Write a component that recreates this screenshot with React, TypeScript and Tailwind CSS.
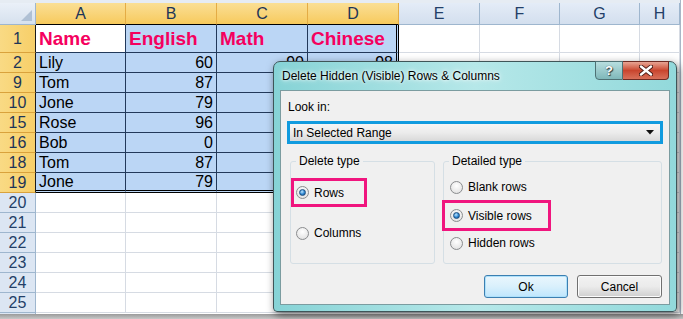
import * as React from 'react';

function cx(...a: (string | false | null | undefined)[]) {
  return a.filter(Boolean).join(' ');
}

/* ========================= sheet data ========================= */
const COLS = ['A', 'B', 'C', 'D', 'E', 'F', 'G', 'H'];
const WIDTHS = ['w-[90px]', 'w-[91px]', 'w-[91px]', 'w-[91px]', 'w-[81px]', 'w-[80px]', 'w-[80px]', 'flex-1'];

type Row = { n: string; v?: string[]; sel?: boolean };

// C/D values sit under the dialog; only row 2's tops peek out
const ROWS: Row[] = [
  { n: '2', v: ['Lily', '60', '90', '98'], sel: true },
  { n: '9', v: ['Tom', '87'], sel: true },
  { n: '10', v: ['Jone', '79'], sel: true },
  { n: '15', v: ['Rose', '96'], sel: true },
  { n: '16', v: ['Bob', '0'], sel: true },
  { n: '18', v: ['Tom', '87'], sel: true },
  { n: '19', v: ['Jone', '79'], sel: true },
  { n: '20' },
  { n: '21' },
  { n: '22' },
  { n: '23' },
  { n: '24' },
  { n: '25' },
];

function RowHead({ n, sel, h }: { n: string; sel?: boolean; h: string }) {
  return (
    <div
      className={cx(
        'w-[36px] shrink-0 flex items-center justify-center border-r border-b text-[16px]',
        h,
        sel
          ? 'bg-gradient-to-r from-[#F9DA84] to-[#F7CF68] border-b-[#D9A23C] border-r-[#1b1b1b] text-[#1D3557]'
          : 'bg-[#DCE6F3] border-b-[#9EB6CE] border-r-[#9EB6CE] text-[#233F68]'
      )}
    >
      {n}
    </div>
  );
}

function SheetRow({ row, last }: { row: Row; last?: boolean }) {
  return (
    <div className="flex h-[20px]">
      <RowHead n={row.n} sel={row.sel} h="h-[20px]" />
      {COLS.map((c, i) => {
        const sel = row.sel && i < 4;
        const val = row.v ? row.v[i] : undefined;
        return (
          <div
            key={c}
            className={cx(
              'shrink-0 flex items-center border-r border-b text-[16px] text-black overflow-hidden whitespace-nowrap',
              WIDTHS[i],
              i === 0 ? 'pl-[3px]' : 'justify-end pr-[3px]',
              sel ? 'bg-[#BBD6F5] border-[#22395A]' : 'bg-white border-[#D6DBE3]',
              sel && i === 3 && 'border-r-[3px] border-r-black border-double',
              sel && last && 'border-b-[3px] border-b-black border-double'
            )}
          >
            {val}
          </div>
        );
      })}
    </div>
  );
}

/* ========================= dialog bits ========================= */
function Radio({ checked }: { checked?: boolean }) {
  return (
    <span className="w-[13px] h-[13px] shrink-0 rounded-full border border-[#8A8C8E] bg-[radial-gradient(circle_at_50%_35%,#ffffff,#dcdcdc)] flex items-center justify-center">
      {checked && (
        <span className="w-[7px] h-[7px] rounded-full border border-[#1E4E7E] bg-[radial-gradient(circle_at_40%_35%,#bfe6ff,#2c86d1_55%,#0f4a86)]" />
      )}
    </span>
  );
}

function Option({ label, checked }: { label: string; checked?: boolean }) {
  return (
    <div className="flex items-center gap-[5px] h-[16px]">
      <Radio checked={checked} />
      <span>{label}</span>
    </div>
  );
}

function Button({ label, focus, className = '' }: { label: string; focus?: boolean; className?: string }) {
  return (
    <button
      className={cx(
        'h-[23px] rounded-[3px] border text-[12px] text-black',
        focus
          ? 'border-[#3C7FB1] bg-gradient-to-b from-[#EAF6FD] via-[#D9F0FC] to-[#BEE6FD] shadow-[inset_0_0_0_1px_#aee1fb]'
          : 'border-[#707070] bg-gradient-to-b from-[#F2F2F2] via-[#EBEBEB] to-[#CFCFCF] shadow-[inset_0_0_0_1px_#fcfcfc]',
        className
      )}
    >
      {label}
    </button>
  );
}

function Dialog() {
  return (
    <div className="absolute left-[273px] top-[61px] w-[404px] h-[251px] rounded-t-[7px] rounded-b-[4px] border border-[#3F5558] bg-gradient-to-r from-[#86D3D6] via-[#B6E8E9] to-[#92D9DB] shadow-[2px_3px_8px_rgba(0,0,0,0.55)] flex flex-col px-[6px] pb-[6px] font-['Liberation_Sans',Arial,sans-serif]">
      {/* title bar */}
      <div className="h-[28px] flex justify-between">
        <div className="self-center pl-[2px] text-[12px] text-black [text-shadow:0_0_6px_#ffffff,0_0_3px_#ffffff]">
          Delete Hidden (Visible) Rows &amp; Columns
        </div>
        <div className="flex self-start -mt-px mr-[1px]">
          <div className="w-[28px] h-[19px] rounded-bl-[4px] border border-[#4E7174] bg-gradient-to-b from-[#B7DEDF] to-[#7FB8BA] flex items-center justify-center text-[13px] font-bold text-white [text-shadow:0_0_1px_#2c3e40,1px_1px_1px_#2c3e40]">
            ?
          </div>
          <div className="w-[46px] h-[19px] rounded-br-[4px] border border-l-0 border-[#6E2A22] bg-gradient-to-b from-[#E7A493] via-[#C9452E] to-[#D8705A] flex items-center justify-center">
            <svg width="14" height="11" viewBox="0 0 14 11">
              <path d="M2 1.5 L12 9.5 M12 1.5 L2 9.5" stroke="#4a1a14" strokeWidth="4.2" strokeLinecap="round" />
              <path d="M2 1.5 L12 9.5 M12 1.5 L2 9.5" stroke="#ffffff" strokeWidth="2.4" strokeLinecap="round" />
            </svg>
          </div>
        </div>
      </div>

      {/* client area */}
      <div className="flex-1 bg-[#F0F0F0] border border-[#7B9CA0] flex flex-col text-[12px] text-black">
        <div className="pl-[7px] pt-[8px] leading-[16px]">Look in:</div>
        <div className="mx-[6px] mt-[6px] h-[23px] border-[3px] border-[#119BDF] bg-gradient-to-b from-[#F5F5F5] via-[#ECECEC] to-[#D9D9D9] flex items-center justify-between pl-[3px] pr-[6px]">
          <span>In Selected Range</span>
          <svg width="8" height="5" viewBox="0 0 8 5">
            <path d="M0 0 H8 L4 4.5 Z" fill="#111" />
          </svg>
        </div>

        <div className="flex gap-[8px] pl-[9px] pr-[7px] mt-[10px]">
          <fieldset className="w-[145px] h-[110px] border border-[#D5DFE5] rounded-[3px]">
            <legend className="ml-[5px] px-[3px] leading-[14px]">Delete type</legend>
            <div className="mt-[10px] w-[76px] h-[29px] border-[3px] border-[#F0157E] flex items-center pl-[2px]">
              <Option label="Rows" checked />
            </div>
            <div className="mt-[18px] pl-[5px]">
              <Option label="Columns" />
            </div>
          </fieldset>
          <fieldset className="flex-1 h-[110px] border border-[#D5DFE5] rounded-[3px]">
            <legend className="ml-[5px] px-[3px] leading-[14px]">Detailed type</legend>
            <div className="mt-[11px] pl-[6px]">
              <Option label="Blank rows" />
            </div>
            <div className="mt-[5px] -ml-[2px] w-[109px] h-[31px] border-[3px] border-[#F0157E] flex items-center pl-[5px]">
              <Option label="Visible rows" checked />
            </div>
            <div className="mt-[4px] pl-[6px]">
              <Option label="Hidden rows" />
            </div>
          </fieldset>
        </div>

        <div className="flex justify-end gap-[9px] pr-[7px] mt-[11px]">
          <Button label="Ok" focus className="w-[84px]" />
          <Button label="Cancel" className="w-[85px]" />
        </div>
      </div>
    </div>
  );
}

/* ========================= app ========================= */
export default function App() {
  return (
    <div className="relative w-[683px] h-[319px] overflow-hidden bg-white font-['Liberation_Sans',Arial,sans-serif]">
      <div className="w-[681px] border-r border-[#A9B6C6]">
        <div className="h-[3px] bg-[#E6ECF3]" />

        {/* column headers */}
        <div className="flex h-[22px]">
          <div className="w-[36px] shrink-0 border-r border-b border-[#9EB6CE] bg-gradient-to-b from-[#EAF0F8] to-[#D6E1EE] relative">
            <svg className="absolute right-[3px] bottom-[3px]" width="11" height="11" viewBox="0 0 11 11">
              <path d="M11 0 V11 H0 Z" fill="#AFC0D4" />
            </svg>
          </div>
          {COLS.map((c, i) => (
            <div
              key={c}
              className={cx(
                'shrink-0 flex items-center justify-center border-r border-b text-[16px]',
                WIDTHS[i],
                i < 4
                  ? 'bg-gradient-to-b from-[#FADF94] to-[#F7CA5C] border-r-[#E4AC45] border-b-black text-[#1D3557]'
                  : 'bg-gradient-to-b from-[#E4ECF7] to-[#D3DFEE] border-[#9EB6CE] text-[#233F68]'
              )}
            >
              {c}
            </div>
          ))}
        </div>

        {/* row 1 */}
        <div className="flex h-[28px]">
          <RowHead n="1" sel h="h-[28px]" />
          {COLS.map((c, i) => (
            <div
              key={c}
              className={cx(
                'shrink-0 flex items-end pb-[1px] pl-[3px] border-r border-b text-[19px] leading-[24px] font-bold text-[#F5005E] whitespace-nowrap overflow-hidden',
                WIDTHS[i],
                i === 0 && 'bg-white border-[#22395A]',
                i > 0 && i < 4 && 'bg-[#BBD6F5] border-[#22395A]',
                i === 3 && 'border-r-[3px] border-r-black border-double',
                i >= 4 && 'bg-white border-[#D6DBE3]'
              )}
            >
              {['Name', 'English', 'Math', 'Chinese'][i]}
            </div>
          ))}
        </div>

        {ROWS.map((r) => (
          <SheetRow key={r.n} row={r} last={r.n === '19'} />
        ))}

        <div className="flex h-[1px]">
          <div className="w-[36px] bg-[#DCE6F3] border-r border-[#9EB6CE]" />
        </div>
      </div>
      <div className="h-[5px] bg-gradient-to-b from-[#9A9A9A] to-[#C8C8C8]" />

      <Dialog />
    </div>
  );
}
